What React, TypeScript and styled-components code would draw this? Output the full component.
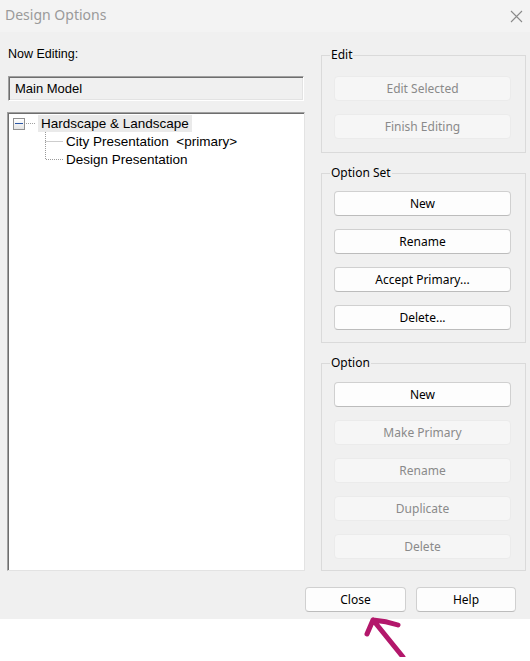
import styled, { createGlobalStyle } from "styled-components";

const GlobalStyle = createGlobalStyle`
    html, body {
        margin: 0;
        padding: 0;
        background: #ffffff;
    }
    body {
        font-family: "Liberation Sans", Arial, sans-serif;
    }
`

const Window = styled.div`
    width: 530px;
    height: 619px;
    background-color: #f0f0f0;
    display: flex;
    flex-direction: column;
    box-sizing: border-box;
`

const TitleBar = styled.div`
    height: 32px;
    flex-shrink: 0;
    background-color: #f3f3f3;
    display: flex;
    align-items: center;
    justify-content: space-between;
    padding: 0 7px 0 5px;
`

const Title = styled.span`
    font-family: "Noto Sans", sans-serif;
    font-size: 14px;
    color: #9a9a9a;
    margin-top: -4px;
`

const Body = styled.div`
    display: flex;
    gap: 16px;
    padding: 15px 4px 0 7px;
`

const LeftCol = styled.div`
    width: 298px;
    display: flex;
    flex-direction: column;
`

const Caption = styled.div`
    font-size: 12.5px;
    line-height: 15px;
    margin-left: 1px;
    color: #000;
`

/* sunken read only field */
const Field = styled.div`
    margin: 14px 0 0 1px;
    width: 296px;
    height: 25px;
    box-sizing: border-box;
    border: 1px solid;
    border-color: #a0a0a0 #ffffff #ffffff #a0a0a0;
    box-shadow: inset 1px 1px 0 #6e6e6e, inset -1px -1px 0 #e3e3e3;
    display: flex;
    align-items: center;
    padding-left: 6px;
    font-size: 13px;
    color: #000;
`

const TreeBox = styled.div`
    margin-top: 11px;
    width: 298px;
    height: 459px;
    box-sizing: border-box;
    background-color: #fff;
    border: 1px solid;
    border-color: #a0a0a0 #e3e3e3 #e3e3e3 #a0a0a0;
    box-shadow: inset 1px 1px 0 #6e6e6e;
    padding: 2px 0 0 5px;
    font-size: 13.5px;
    color: #000;
`

const TreeRow = styled.div`
    display: flex;
    align-items: center;
    height: 17px;
`

const Expander = styled.span`
    width: 12px;
    height: 12px;
    box-sizing: border-box;
    border: 1px solid #919191;
    background: linear-gradient(#ffffff, #e4e4e4);
    display: flex;
    align-items: center;
    justify-content: center;
`

const Minus = styled.span`
    width: 8px;
    height: 1px;
    background-color: #2b57a6;
`

const Dots = styled.span`
    width: 9px;
    margin-left: 1px;
    border-top: 1px dotted #a0a0a0;
`

const NodeLabel = styled.span<{ $selected?: boolean }>`
    margin-left: 3px;
    padding: 0 3px;
    line-height: 17px;
    white-space: pre;
    background-color: ${p => p.$selected ? "#eaeaea" : "transparent"};
`

const ChildRow = styled.div`
    display: flex;
    align-items: center;
    height: 18px;
    margin-left: 32px;
`

const ChildLabel = styled.span`
    margin-left: 1px;
    white-space: pre;
`

const RightCol = styled.div`
    width: 205px;
    display: flex;
    flex-direction: column;
    gap: 12px;
`

const Group = styled.fieldset<{ $top: number; $bottom: number }>`
    margin: 0;
    min-width: 0;
    border: 1px solid #dadada;
    padding: ${p => p.$top}px 14px ${p => p.$bottom}px 12px;
    display: flex;
    flex-direction: column;
    gap: 13px;
`

const Legend = styled.legend`
    margin-left: -4px;
    padding: 0 1px;
    font-family: "Noto Sans", sans-serif;
    font-size: 12px;
    line-height: 16px;
    color: #000;
`

const Button = styled.button<{ $width?: number }>`
    width: ${p => p.$width ? p.$width + "px" : "100%"};
    height: 25px;
    box-sizing: border-box;
    border-radius: 4px;
    border: 1px solid #d0d0d0;
    border-bottom-color: #bcbcbc;
    background-color: #fdfdfd;
    font-family: "Noto Sans", sans-serif;
    font-size: 12px;
    color: #000;
    padding: 0;
    &:disabled {
        background-color: #f6f6f6;
        border-color: #ebebeb;
        color: #8a8a8a;
    }
`

const Footer = styled.div`
    display: flex;
    justify-content: flex-end;
    gap: 10px;
    padding: 16px 14px 7px 0;
    margin-top: auto;
`

const Below = styled.div`
    height: 42px;
    padding-left: 360px;
`

const Arrow = styled.svg`
    display: block;
    margin-top: -4px;
`

const CloseIcon = () => (
    <svg width="13" height="13" viewBox="0 0 13 13">
        <path d="M1 1 L12 12 M12 1 L1 12" stroke="#8a8a8a" strokeWidth="1.1" fill="none" />
    </svg>
)

const Branch = ({ last }: { last?: boolean }) => (
    <svg width="20" height="18" viewBox="0 0 20 18">
        <path d={last ? "M0.5 0 V9.5 H18" : "M0.5 0 V18 M0.5 9.5 H18"} stroke="#9a9a9a" strokeDasharray="1 1" fill="none" />
    </svg>
)

const App = () => {
    const optionSet = ["New", "Rename", "Accept Primary...", "Delete..."]
    const option = [
        { label: "New", enabled: true },
        { label: "Make Primary", enabled: false },
        { label: "Rename", enabled: false },
        { label: "Duplicate", enabled: false },
        { label: "Delete", enabled: false },
    ]
    return (
        <>
            <GlobalStyle />
            <Window>
                <TitleBar>
                    <Title>Design Options</Title>
                    <CloseIcon />
                </TitleBar>
                <Body>
                    <LeftCol>
                        <Caption>Now Editing:</Caption>
                        <Field>Main Model</Field>
                        <TreeBox>
                            <TreeRow>
                                <Expander><Minus /></Expander>
                                <Dots />
                                <NodeLabel $selected>Hardscape &amp; Landscape</NodeLabel>
                            </TreeRow>
                            <ChildRow>
                                <Branch />
                                <ChildLabel>{"City Presentation  <primary>"}</ChildLabel>
                            </ChildRow>
                            <ChildRow>
                                <Branch last />
                                <ChildLabel>Design Presentation</ChildLabel>
                            </ChildRow>
                        </TreeBox>
                    </LeftCol>
                    <RightCol>
                        <Group $top={13} $bottom={13}>
                            <Legend>Edit</Legend>
                            <Button disabled>Edit Selected</Button>
                            <Button disabled>Finish Editing</Button>
                        </Group>
                        <Group $top={10} $bottom={12}>
                            <Legend>Option Set</Legend>
                            {optionSet.map((label, idx) =>
                                <Button key={idx}>{label}</Button>
                            )}
                        </Group>
                        <Group $top={11} $bottom={11}>
                            <Legend>Option</Legend>
                            {option.map((o, idx) =>
                                <Button key={idx} disabled={!o.enabled}>{o.label}</Button>
                            )}
                        </Group>
                    </RightCol>
                </Body>
                <Footer>
                    <Button $width={101}>Close</Button>
                    <Button $width={100}>Help</Button>
                </Footer>
            </Window>
            <Below>
                <Arrow width="48" height="46" viewBox="0 0 48 46">
                    <path d="M7 19 L13 5 Q26 6 38 10 M13 5 L43 42" stroke="#b3176b" strokeWidth="5" strokeLinecap="round" strokeLinejoin="round" fill="none" />
                </Arrow>
            </Below>
        </>
    )
}

export default App;
